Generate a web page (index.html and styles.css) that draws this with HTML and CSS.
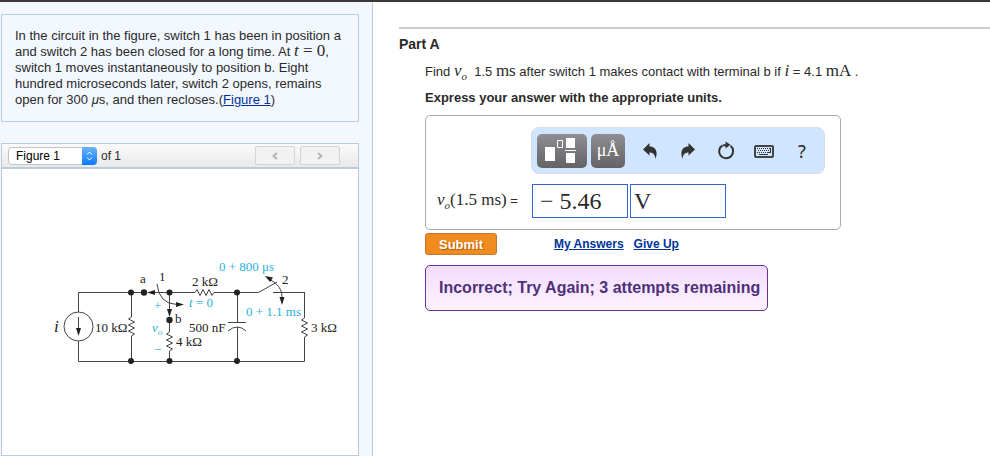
FILE: index.html
```
<!DOCTYPE html>
<html lang="en">
<head>
    <meta charset="utf-8">
    <title>Part A</title>
    <link rel="stylesheet" href="styles.css">
</head>
<body>
    <div class="page">
        <aside class="sidebar">
            <div class="problem">
                In the circuit in the figure, switch 1 has been in position a and switch 2 has been closed for a long time. At <span class="math"><i>t</i> = 0</span>, switch 1 moves instantaneously to position b. Eight hundred microseconds later, switch 2 opens, remains open for 300 <i>μ</i>s, and then recloses.(<a href="#figure">Figure 1</a>)
            </div>
            <section class="figure" id="figure">
                <div class="figure-bar">
                    <span class="picker">
                        <select id="figure-select">
                            <option>Figure 1</option>
                        </select>
                        <svg class="picker-arrows" viewBox="0 0 15 18" aria-hidden="true">
                            <path d="M5 7.500 7.500 5 10 7.500M5 10.500 7.500 13 10 10.500"/>
                        </svg>
                    </span>
                    <label for="figure-select">of 1</label>
                    <div class="pager">
                        <button type="button" aria-label="Previous figure" disabled><svg viewBox="0 0 8 8"><path d="M6 1 2.500 4 6 7"/></svg></button>
                        <button type="button" aria-label="Next figure" disabled><svg viewBox="0 0 8 8"><path d="M2 1 5.500 4 2 7"/></svg></button>
                    </div>
                </div>
                <svg class="circuit" viewBox="2 169 356 286" role="img" aria-label="Circuit diagram">
                    <g class="wire">
                        <!-- outer loop and current source -->
                        <path d="M78.500 312V292.500H144M78.500 341V361.500H304.500V337"/>
                        <circle cx="78.500" cy="326.500" r="14.500"/>
                        <path d="M78.500 317V329"/>
                        <!-- 10k, 4k and 3k resistors -->
                        <path d="M131.500 292V317l-3 2 6 3-6 3 6 3-6 3 6 3-3 2V361"/>
                        <path d="M169.500 320V332l-3 2 6 3-6 3 6 3-6 3 6 3-3 2V361"/>
                        <path d="M304.500 292V318l-3 2 6 3-6 3 6 3-6 3 6 3-3 2V343"/>
                        <!-- 2k resistor and top rail -->
                        <path d="M152 292.500H195l2-3 3 6 3-6 3 6 3-6 3 6 2-3H258.500L277 282M273 292.500H304.500"/>
                        <!-- capacitor -->
                        <path d="M237.500 292V322.500M228 322.500H246M228 331Q237.500 323 246 331M237.500 327V361"/>
                        <!-- switch throws -->
                        <path d="M169.500 292V312M157 284Q159 304 177 304.500M269 279Q283 286 282 298"/>
                    </g>
                    <g class="dots">
                        <circle cx="131" cy="292.500" r="3"/>
                        <circle cx="144" cy="292.500" r="3.200"/>
                        <circle cx="169.500" cy="292.500" r="3"/>
                        <circle cx="237" cy="292.500" r="3"/>
                        <circle cx="169.500" cy="320" r="3.200"/>
                        <circle cx="131" cy="361" r="3"/>
                        <circle cx="169.500" cy="361" r="3"/>
                        <circle cx="237" cy="361" r="3"/>
                        <path d="M78.500 336 76 328H81zM147 292.500 155 290V295zM169.500 317 167 309H172zM184 304.500 176 302V307zM265 276 273 277.500 270 282zM282 305 279.500 297H284.500z"/>
                    </g>
                    <g class="labels">
                        <text class="var" x="54" y="332">i</text>
                        <text x="95" y="332">10 kΩ</text>
                        <text x="140" y="283">a</text>
                        <text x="159" y="281">1</text>
                        <text x="192" y="286">2 kΩ</text>
                        <text x="175" y="323">b</text>
                        <text x="176" y="346">4 kΩ</text>
                        <text x="189" y="332">500 nF</text>
                        <text x="282" y="284">2</text>
                        <text x="311" y="332">3 kΩ</text>
                    </g>
                    <g class="labels timing">
                        <text x="219" y="271">0 + 800 μs</text>
                        <text x="246" y="316">0 + 1.1 ms</text>
                        <text x="189" y="307"><tspan font-style="italic">t</tspan> = 0</text>
                        <text x="154" y="310">+</text>
                        <text x="154" y="354">−</text>
                        <text x="152" y="332" font-style="italic">v<tspan dy="3" font-size="9">o</tspan></text>
                    </g>
                </svg>
            </section>
        </aside>

        <main class="content">
            <h2>Part A</h2>
            <div class="part">
                <p>Find <span class="math"><i>v</i><sub>o</sub></span>&nbsp; 1.5 <span class="math">ms</span> after switch 1 makes contact with terminal b if <span class="math"><i>i</i></span> = 4.1 <span class="math">mA</span> .</p>
                <p class="hint">Express your answer with the appropriate units.</p>

                <form class="answer" id="answer">
                    <div class="toolbar">
                        <button type="button" class="dark templates" aria-label="Templates">
                            <svg viewBox="0 0 50 34">
                                <path class="fill" d="M8 13H18V27H8zM29 4H38V14H29zM29 19H38V29H29zM28 16H39V17H28z"/>
                                <path class="box" d="M20.500 6.500H25.500V13.500H20.500z"/>
                            </svg>
                        </button>
                        <button type="button" class="dark units">μÅ</button>
                        <button type="button" class="tool" aria-label="Undo">
                            <svg viewBox="0 0 16 16"><path d="M1 6.500 7.500 0V3.500C13 3.500 16.500 8 13.500 16C13 11.500 11 9.500 7.500 9.500V12.500z"/></svg>
                        </button>
                        <button type="button" class="tool" aria-label="Redo">
                            <svg viewBox="0 0 16 16"><path d="M15 6.500 8.500 0V3.500C3 3.500 -.5 8 2.500 16C3 11.500 5 9.500 8.500 9.500V12.500z"/></svg>
                        </button>
                        <button type="button" class="tool" aria-label="Reset">
                            <svg class="large" viewBox="0 0 20 20"><path class="ring" d="M6.500 4.300A7 7 0 1 0 14.500 4.800M7 4.200H11"/><path d="M9.500 .5 14.500 3.800 9.500 7.500z"/></svg>
                        </button>
                        <button type="button" class="tool" aria-label="Keyboard">
                            <svg class="large" viewBox="0 0 20 20"><rect class="key" x="1" y="5" width="18" height="11" rx="1"/><path class="keys" d="M3 7.500H17M4 9.500H17M3 11.500H14"/><path d="M5 13H14V14H5zM16 7H17V12H14V11H16z"/></svg>
                        </button>
                        <button type="button" class="tool help" aria-label="Help">?</button>
                    </div>
                    <label class="quantity" for="value"><span class="math"><i>v</i><sub>o</sub>(1.5 ms)</span> =</label>
                    <div class="fields">
                        <input type="text" id="value" class="value" value="− 5.46">
                        <input type="text" class="unit" value="V" aria-label="Units">
                    </div>
                </form>

                <div class="actions">
                    <button type="submit" form="answer" class="submit">Submit</button>
                    <a href="#answers">My Answers</a>
                    <a href="#giveup">Give Up</a>
                </div>
                <div class="feedback">Incorrect; Try Again; 3 attempts remaining</div>
            </div>
        </main>
    </div>
</body>
</html>
```
FILE: styles.css
```
* {
    box-sizing: border-box;
}
body {
    margin: 0;
    font-family: "Liberation Sans", Arial, sans-serif;
    font-size: 13px;
    line-height: 16px;
    color: #2a2a2a;
    background: white;
}
a {
    color: #039;
}
button, input, select {
    margin: 0;
    padding: 0;
    font-family: inherit;
    color: inherit;
}
.page {
    display: flex;
    min-height: 100vh;
    border-top: 2px solid #3a3838;
}
.math {
    font-family: "Liberation Serif", "Times New Roman", serif;
    font-size: 17px;
    line-height: 1px;
}
.math sub {
    font-size: 11px;
    font-style: italic;
    line-height: 1px;
}

/* left column */
.sidebar {
    display: flex;
    flex-direction: column;
    flex: 0 0 373px;
    padding: 12px 13px 0 1px;
    background: #f3f8ff;
    border-right: 1px solid #b8cbdf;
}
.problem {
    padding: 13px;
    border: 1px solid #b8cbdf;
}
.figure {
    display: flex;
    flex-direction: column;
    flex: 1;
    margin-top: 21px;
    background: white;
    border: 1px solid #b8cbdf;
}
.figure-bar {
    display: flex;
    align-items: center;
    height: 25px;
    padding: 0 18px 0 6px;
    background: linear-gradient(#fafafa, #e9e9e9);
    border-bottom: 2px solid #b8cbdf;
}
.figure-bar label {
    margin-left: 4px;
    font-size: 12px;
}
.picker {
    position: relative;
    height: 18px;
}
.picker select {
    display: block;
    width: 89px;
    height: 18px;
    padding-left: 7px;
    font-size: 12px;
    color: black;
    appearance: none;
    background: white;
    border: 1px solid #c4c4c4;
    border-radius: 4px;
}
.picker-arrows {
    position: absolute;
    top: 0;
    right: 0;
    width: 15px;
    height: 18px;
    background: linear-gradient(#6cb3fa, #0a7aff);
    border-radius: 0 4px 4px 0;
    fill: none;
    stroke: white;
    pointer-events: none;
}
.pager {
    display: flex;
    gap: 5px;
    margin-left: auto;
}
.pager button {
    display: flex;
    align-items: center;
    justify-content: center;
    width: 40px;
    height: 19px;
    background: #f2f2f2;
    border: 1px solid #d4d4d4;
    border-radius: 2px;
}
.pager svg {
    width: 8px;
    height: 8px;
    fill: none;
    stroke: #b5b5b5;
    stroke-width: 2;
}
.circuit {
    display: block;
    width: 100%;
}
.wire {
    fill: none;
    stroke: #444;
    stroke-width: 1;
}
.dots {
    fill: #222;
}
.labels {
    font-family: "Liberation Serif", "Times New Roman", serif;
    font-size: 13px;
    fill: #222;
}
.labels .var {
    font-size: 17px;
    font-style: italic;
}
.timing {
    fill: #27b2dd;
}

/* right column */
.content {
    flex: 1;
    padding: 25px 0 0 26px;
}
h2 {
    margin: 0;
    padding-top: 7px;
    font-size: 14px;
    line-height: 16px;
    border-top: 2px solid #ccc;
}
.part {
    padding: 12px 20px 20px 26px;
}
.part p {
    margin: 0 0 10px;
}
.part .hint {
    margin-bottom: 9px;
    font-weight: bold;
}
.answer {
    display: grid;
    grid-template-columns: 96px 1fr;
    row-gap: 10px;
    align-items: center;
    max-width: 416px;
    padding: 11px 15px 11px 9px;
    border: 1px solid #aaa;
    border-radius: 5px;
}
.toolbar {
    display: flex;
    grid-column: 2;
    align-items: center;
    height: 47px;
    padding-left: 5px;
    background: #d0e5ff;
    border: 1px solid #d9dde3;
    border-radius: 8px;
}
.toolbar button {
    display: flex;
    align-items: center;
    justify-content: center;
    height: 34px;
    border: 0;
}
.toolbar .dark {
    color: white;
    background: linear-gradient(#8f8e92, #636366);
    border-radius: 5px;
}
.toolbar .templates {
    width: 50px;
    margin-right: 4px;
}
.templates svg {
    width: 50px;
    height: 34px;
}
.templates .fill {
    fill: white;
}
.templates .box {
    fill: none;
    stroke: white;
}
.toolbar .units {
    width: 34px;
    margin-right: 6px;
    font-family: "Liberation Serif", "Times New Roman", serif;
    font-size: 18px;
}
.toolbar .tool {
    width: 38px;
    background: none;
}
.tool svg {
    width: 16px;
    height: 16px;
    fill: #333;
}
.tool svg.large {
    width: 20px;
    height: 20px;
}
.tool .ring,
.tool .key {
    fill: none;
    stroke: #333;
    stroke-width: 2;
}
.tool .key {
    stroke: #444;
}
.tool .keys {
    stroke: #333;
    stroke-dasharray: 1 1;
}
.toolbar .help {
    font-family: "Noto Sans", sans-serif;
    font-size: 18px;
}
.quantity {
    padding-left: 2px;
}
.fields {
    display: flex;
    gap: 2px;
    padding-left: 1px;
}
.fields input {
    width: 96px;
    height: 34px;
    font-family: "Liberation Serif", "Times New Roman", serif;
    font-size: 24px;
    border: 1px solid #36c;
}
.fields .value {
    padding-left: 7px;
}
.fields .unit {
    padding-left: 3px;
}
.actions {
    display: flex;
    align-items: center;
    gap: 10px;
    margin-top: 3px;
    font-size: 12px;
    font-weight: bold;
}
.submit {
    width: 72px;
    height: 22px;
    margin-right: 47px;
    font-size: 13px;
    font-weight: bold;
    color: white;
    text-shadow: 1px 1px 1px #a55a10;
    background: #f08c1e;
    border: 1px solid #c9772b;
    border-radius: 3px;
}
.feedback {
    width: fit-content;
    margin-top: 10px;
    padding: 14px 7px 14px 13px;
    font-size: 16px;
    font-weight: bold;
    color: #503078;
    background: linear-gradient(#f2dcfd, #fdf3ff);
    border: 1px solid #639;
    border-radius: 5px;
}
```
